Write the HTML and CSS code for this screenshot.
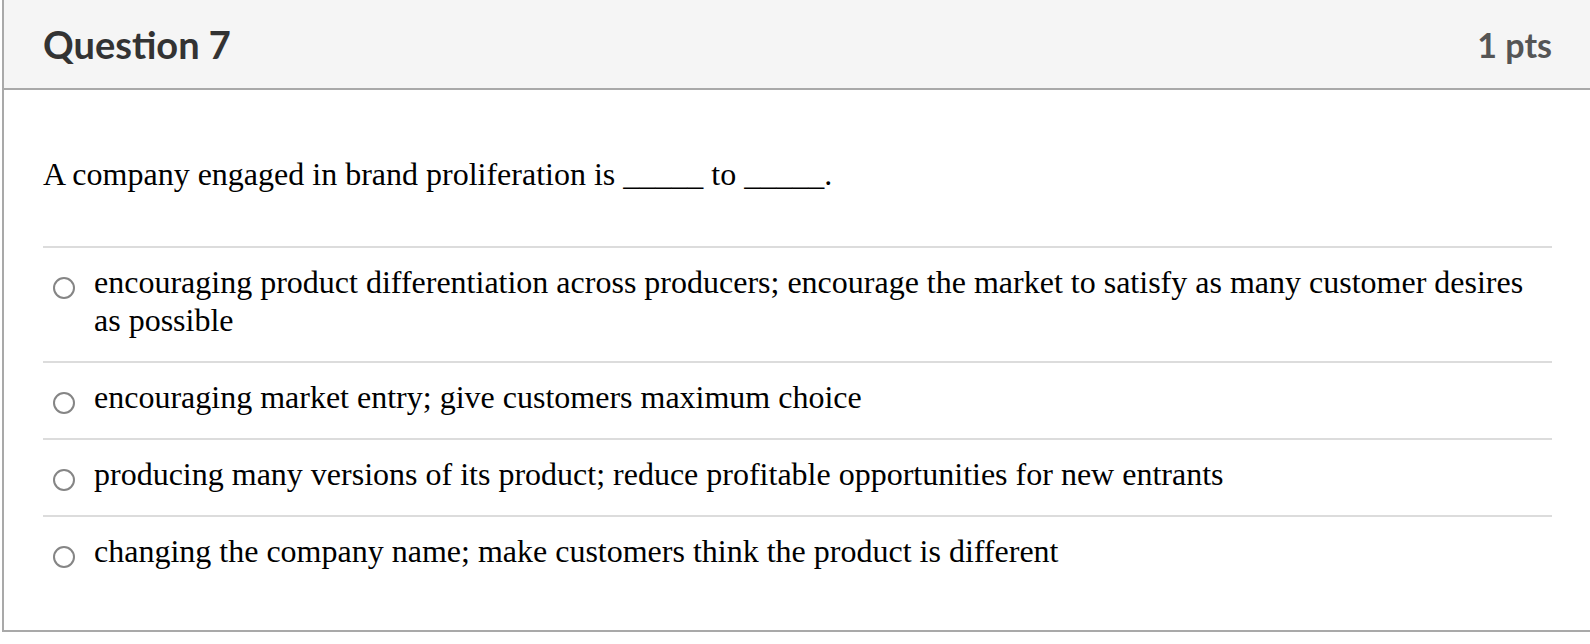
FILE: index.html
```html
<!DOCTYPE html>
<html lang="en">
<head>
<meta charset="utf-8">
<title>Question 7</title>
<link rel="stylesheet" href="styles.css">
</head>
<body>
<div class="card">
  <div class="header">
    <h2 class="title">Question 7</h2>
    <span class="points">1 pts</span>
  </div>
  <div class="body">
    <p class="question">A company engaged in brand proliferation is _____ to _____.</p>
    <div class="answers">
      <label class="answer"><span class="radio"></span><span class="text">encouraging product differentiation across producers; encourage the market to satisfy as many customer desires as possible</span></label>
      <label class="answer"><span class="radio"></span><span class="text">encouraging market entry; give customers maximum choice</span></label>
      <label class="answer"><span class="radio"></span><span class="text">producing many versions of its product; reduce profitable opportunities for new entrants</span></label>
      <label class="answer"><span class="radio"></span><span class="text">changing the company name; make customers think the product is different</span></label>
    </div>
  </div>
</div>
</body>
</html>
```

FILE: styles.css
```css
html, body {
  margin: 0;
  padding: 0;
  background: #ffffff;
}

.card {
  margin-left: 2px;
  border-left: 2px solid #a9a9a9;
  border-bottom: 2px solid #a9a9a9;
  background: #ffffff;
}

.header {
  height: 88px;
  background: #f5f5f5;
  border-bottom: 2px solid #a9a9a9;
  display: flex;
  align-items: center;
  justify-content: space-between;
  padding: 0 38px 0 39px;
  font-family: Lato, "Liberation Sans", sans-serif;
  font-weight: 700;
}

.title {
  margin: 0;
  font-size: 38px;
  font-weight: 700;
  color: #333333;
}

.points {
  font-size: 34px;
  color: #555555;
}

.body {
  padding: 65px 38px 38px 39px;
  font-family: "Liberation Serif", "Times New Roman", serif;
  font-size: 32px;
  line-height: 38px;
  color: #000000;
}

.question {
  margin: 0 0 53px 0;
}

.answers {
  display: flex;
  flex-direction: column;
}

.answer {
  display: flex;
  align-items: flex-start;
  gap: 19px;
  border-top: 2px solid #dcdcdc;
  padding: 15px 0 22px 10px;
}

.radio {
  flex: none;
  box-sizing: border-box;
  width: 22px;
  height: 22px;
  margin-top: 14px;
  border: 2px solid #858585;
  border-radius: 50%;
  background: #ffffff;
}

.text {
  flex: 1;
}
```
